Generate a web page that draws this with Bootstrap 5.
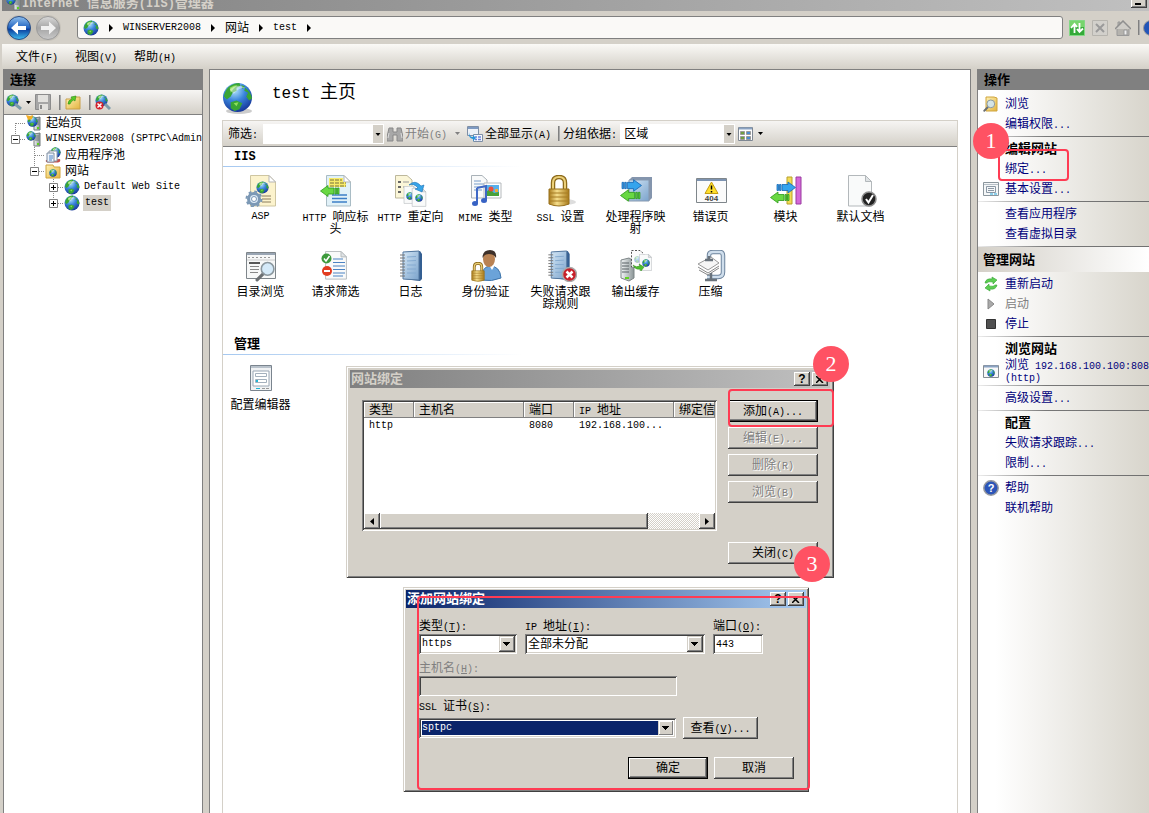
<!DOCTYPE html>
<html lang="zh-CN">
<head>
<meta charset="utf-8">
<meta name="viewport" content="width=device-width, initial-scale=1">
<title>Internet 信息服务(IIS)管理器</title>
<link href="https://cdn.jsdelivr.net/npm/bootstrap@5.3.0/dist/css/bootstrap.min.css" rel="stylesheet">
<style>
:root{--face:#d4d0c8;--shade:#808080;--dark:#404040;--navy:#00007b;--note:#ff3b53}
body{font:12px/16px "Liberation Sans","Noto Sans CJK SC",sans-serif;color:#000;background:var(--face)}
.la{font-family:"Liberation Mono",monospace;font-size:10px;white-space:pre}
span.la{line-height:0}
.tile>span.la{line-height:12px}
svg{flex:none;display:block}
a{color:inherit;text-decoration:none}
.i16{width:16px;height:16px}.i32{width:32px;height:32px}
.bold13{font-size:13px;font-weight:700}
.bold13 .la{font-size:12px}
/* window frame */
.wintitle{height:11px;margin-left:2px;background:linear-gradient(90deg,#808080,#c0c0c0);color:var(--face);padding-left:4px}
.caps{gap:2px;padding-right:2px;margin-bottom:3px}
.navrow{height:33px;padding-left:6px;gap:6px}
.orb{width:24px;height:24px;border:0;padding:0;background:none}
.orbs{background:#c6c2ba;border-radius:13px;padding:1px;gap:5px;margin-right:10px}
.crumbs{height:23px;gap:10px;padding-left:5px;background:#faf9f7;border:1px solid var(--shade);border-radius:3px;min-width:0}
.navtools{gap:7px;width:80px}
.iconbtn{border:0;padding:0;background:none;color:inherit}
.menurow{height:25px;margin-left:2px;padding-left:14px;gap:17px;background:linear-gradient(#faf9f6,var(--face))}
.panes{padding-left:3px;gap:6px;min-height:0}
.tree-pane{width:200px;border:1px solid var(--shade);border-width:0 1px}
.pane-head{height:21px;background:var(--shade);padding-left:6px;line-height:21px}
.grad{background:linear-gradient(#f6f5f3,var(--face))}
.tools{height:25px;border-bottom:1px solid var(--shade)}
.vsep{width:2px;height:15px;background:linear-gradient(90deg,#808080 50%,#aaa 50%)}
.tree li{display:flex;align-items:center;height:16px;padding-left:7px;white-space:nowrap}
.tree .lv1{padding-left:26px}.tree .lv2{padding-left:45px}
.tree .txt{margin-left:4px}
.tree .sel{background:var(--face);margin-left:3px;padding:0 2px 0 2px}
.tw{width:15px;height:16px}
/* centre */
.home-pane{border:1px solid var(--shade);border-bottom:0;padding:0 12px;min-width:0}
.hd{height:50px;gap:18px;padding-top:12px}
.hd h1{font-size:18px;font-weight:400;line-height:20px;margin:0}
.hd h1 .la{font-size:16px}
.feature{border:1px solid var(--face);border-bottom:0}
.flat-select{appearance:none;border:0;border-radius:0;height:20px;padding:0 14px 0 4px;font:inherit;color:#000;
 background:#fff url("data:image/svg+xml,%3Csvg xmlns='http://www.w3.org/2000/svg' width='10' height='18'%3E%3Cpath fill='%23d4d0c8' d='M0 0h10v18H0z'/%3E%3Cpath d='M2.500 8h5l-2.500 3z'/%3E%3C/svg%3E") right 1px center no-repeat}
.ft{gap:3px;height:26px;padding-left:5px;border-bottom:1px solid var(--shade)}
.sect{height:20px;line-height:18px;padding-left:11px;margin:0;background:linear-gradient(90deg,#a5c8f0,#fff 300px) left bottom/100% 1px no-repeat}
.tiles{display:grid;grid-template-columns:repeat(auto-fill,75px);grid-auto-rows:75px;padding-top:8px}
.tile{display:flex;flex-direction:column;align-items:center;text-align:center;line-height:12px;gap:4px}
/* actions */
.act-pane{width:172px}
.act-in{border-left:1px solid var(--shade);background:linear-gradient(90deg,#fff 10%,#d8d5cc);overflow:hidden}
.grp{list-style:none;margin:0;padding:2px 0;color:var(--navy);border-bottom:1px solid;border-image:linear-gradient(90deg,#eee,#777 40%,#707070) 1}
.grp li{display:flex;align-items:center;height:20px;padding-left:5px;gap:6px;white-space:nowrap}
.grp li.two-line{height:24px}
.grp .ic{width:16px;flex:none}
.grp .bold13{color:#000}
.sub{height:25px;line-height:25px;padding-left:5px;background:linear-gradient(90deg,var(--face),#fff)}
/* classic controls */
.dlg{position:absolute;background:var(--face);padding:4px;box-shadow:inset 1px 1px #d4d0c8,inset -1px -1px #404040,inset 2px 2px #fff,inset -2px -2px #808080}
.dlg-a{left:136px;top:296px;width:488px;height:212px}
.dlg-b{left:193px;top:517px;width:406px;height:205px;padding:3px}
.cap{height:18px;padding:0 2px 0 1px;color:var(--face);background:linear-gradient(90deg,#808080,#c0c0c0)}
.cap.on{color:#fff;background:linear-gradient(90deg,#0a246a,#a6caf0)}
.capbtn{width:16px;height:14px;padding:0;border:0;background:var(--face);box-shadow:inset -1px -1px #404040,inset 1px 1px #fff,inset -2px -2px #808080;color:#000;display:flex;align-items:center;justify-content:center}
.cbtn{height:22px;padding:0;border:0;width:90px;background:var(--face);color:#000;font:inherit;line-height:20px;box-shadow:inset -1px -1px #404040,inset 1px 1px #fff,inset -2px -2px #808080}
.cbtn:disabled{color:#808080;text-shadow:1px 1px #fff}
.cbtn.def{border:1px solid #000}
.w80{width:80px}.w75{width:75px}
.sunk,.sunk-edge{box-shadow:inset 1px 1px #808080,inset -1px -1px #fff,inset 2px 2px #404040,inset -2px -2px #d4d0c8}
.sunk{background:#fff}
.lv{width:355px;height:131px;padding:2px;overflow:hidden}
.lv table{table-layout:fixed;width:100%}
.lv th{height:16px;font-weight:400;line-height:16px;padding:0 0 0 5px;background:var(--face);box-shadow:inset -1px -1px #808080,inset 1px 1px #fff;white-space:nowrap;overflow:hidden}
.lv td{padding:0 0 0 5px;white-space:nowrap}
.hscroll{height:16px;background:repeating-conic-gradient(#fff 0 25%,#d4d0c8 0 50%) 0 0/2px 2px}
.thumb,.sbtn{background:var(--face);border:0;padding:0;height:16px;box-shadow:inset -1px -1px #404040,inset 1px 1px #fff,inset -2px -2px #808080}
.sbtn{width:16px}.thumb{width:268px}
.fld{height:20px;border:0;border-radius:0;appearance:none;padding:2px 20px 2px 3px;color:#000}
.drop{background:#fff url("data:image/svg+xml,%3Csvg xmlns='http://www.w3.org/2000/svg' width='16' height='16' shape-rendering='crispEdges'%3E%3Cpath fill='%23d4d0c8' d='M0 0h16v16H0z'/%3E%3Cpath fill='none' stroke='%23404040' d='M0 15.500h15.500V0'/%3E%3Cpath fill='none' stroke='%23808080' d='M1 14.500h13.500V1'/%3E%3Cpath fill='none' stroke='%23fff' d='M1.500 14V1.500H14'/%3E%3Cpath d='M4 6h7v1H4zM5 7h5v1H5zM6 8h3v1H6zM7 9h1v1H7z'/%3E%3C/svg%3E") right 2px center no-repeat}
.picked{background-color:#0a246a;color:#fff;box-shadow:inset 1px 1px #808080,inset -1px -1px #fff,inset 2px 2px #404040,inset -2px -2px #d4d0c8,inset 3px 3px #fff,inset -3px -3px #fff}
.lab{line-height:16px;white-space:nowrap}
/* tutorial marks */
.ring{position:absolute;border:2px solid var(--note);border-radius:4px;pointer-events:none}
.step{position:absolute;width:36px;height:36px;border-radius:50%;background:#ff5263;color:#fff;font:22px/36px "Liberation Serif",serif;text-align:center}
</style>
</head>
<body class="vh-100 overflow-hidden d-flex flex-column">
<svg width="0" height="0" class="position-absolute" aria-hidden="true">
<defs>
<radialGradient id="sea" cx=".4" cy=".25" r=".8"><stop offset="0" stop-color="#b5e6fb"/><stop offset=".45" stop-color="#3b86dd"/><stop offset="1" stop-color="#122f93"/></radialGradient>
<linearGradient id="gold" x2="1"><stop stop-color="#a97b1c"/><stop offset=".4" stop-color="#f6de8b"/><stop offset="1" stop-color="#a87a1a"/></linearGradient>
<linearGradient id="steel" x2="1"><stop stop-color="#f2f5f6"/><stop offset="1" stop-color="#8b9597"/></linearGradient>
<linearGradient id="bluebk" x2="1" y2="1"><stop stop-color="#d3e6f5"/><stop offset="1" stop-color="#7ba3cc"/></linearGradient>
<linearGradient id="orbB" x2="0" y2="1"><stop stop-color="#8fc0ee"/><stop offset=".5" stop-color="#2062c0"/><stop offset=".55" stop-color="#0a3c9c"/><stop offset="1" stop-color="#3fc0f2"/></linearGradient>
<linearGradient id="orbG" x2="0" y2="1"><stop stop-color="#d9d9d9"/><stop offset=".5" stop-color="#a5a5a5"/><stop offset="1" stop-color="#c9c9c9"/></linearGradient>
<linearGradient id="fold" x2="1" y2="1"><stop stop-color="#fff2b4"/><stop offset="1" stop-color="#e3b33f"/></linearGradient>
<symbol id="globe" viewBox="0 0 32 32"><circle cx="16" cy="16" r="15" fill="url(#sea)"/><path d="M7 5Q12 1 18 1L19 4 15 6 15 9 11 11 9 15 5 18 2 15Q3 9 7 5ZM24 6Q30 11 31 17L28 19 25 15 27 11 23 9ZM9 21L15 19 21 22 18 28 13 30 9 27ZM20 3L24 5 21 7Z" fill="#39a535"/><path d="M8 6Q12 3 16 3L12 7 9 11ZM12 22L17 21 15 25Z" fill="#8ede5d"/><path d="M8 8Q15 1 24 6Q17 6 12 12Z" fill="#fff" opacity=".45"/></symbol>
<symbol id="server" viewBox="0 0 16 16"><path d="M8 3L14 2V15H8Z" fill="url(#steel)" stroke="#727b7d"/><path d="M9 5H13M9 7H13M9 9H13" stroke="#6b7476"/><path d="M11 12h2v2h-2z" fill="#5fd120"/></symbol>
<symbol id="srvglobe" viewBox="0 0 16 16"><use href="#server"/><use href="#globe" x="0" y="0" width="10" height="10"/></symbol>
<symbol id="start" viewBox="0 0 16 16"><use href="#server"/><use href="#globe" x="1" y="1" width="11" height="11"/><path d="M0 0L4 1 7 0 6 4 2 5Z" fill="#f3ad25"/></symbol>
<symbol id="pools" viewBox="0 0 16 16"><use href="#globe" x="5" y="0" width="11" height="11"/><path d="M1 13Q0 15 3 15.500H13Q16 15 15 12" fill="#c4504a"/><path d="M4 4h8v10H4z" fill="#fff" stroke="#8b97a5"/><path d="M2 6h7v9H2z" fill="#edf3fb" stroke="#7f8da0"/><path d="M4 9h4M4 11h4M4 13h3" stroke="#4c83c5"/></symbol>
<symbol id="sites" viewBox="0 0 16 16"><path d="M1 4V2H8L9 4H15V15H1Z" fill="url(#fold)" stroke="#cfa43d"/><use href="#globe" x="4" y="6" width="8" height="8"/></symbol>
<symbol id="t-first" viewBox="0 0 15 16"><path d="M4.500 8V16M5 8.500H15" stroke="#888" stroke-dasharray="1 1"/></symbol>
<symbol id="t-mid" viewBox="0 0 15 16"><path d="M4.500 0V16M5 8.500H15" stroke="#888" stroke-dasharray="1 1"/></symbol>
<symbol id="t-minus" viewBox="0 0 15 16"><path d="M4.500 0V4M9 8.500H15" stroke="#888" stroke-dasharray="1 1"/><path d="M.5 4.500h8v8h-8z" fill="#fff" stroke="#808080"/><path d="M2 8.500h5" stroke="#000"/></symbol>
<symbol id="t-plus" viewBox="0 0 15 16"><path d="M4.500 0V16M9 8.500H15" stroke="#888" stroke-dasharray="1 1"/><path d="M.5 4.500h8v8h-8z" fill="#fff" stroke="#808080"/><path d="M2 8.500h5M4.500 6v5" stroke="#000"/></symbol>
<symbol id="t-plus-end" viewBox="0 0 15 16"><path d="M4.500 0V4M9 8.500H15" stroke="#888" stroke-dasharray="1 1"/><path d="M.5 4.500h8v8h-8z" fill="#fff" stroke="#808080"/><path d="M2 8.500h5M4.500 6v5" stroke="#000"/></symbol>
<symbol id="arrR" viewBox="0 0 4 8"><path d="M0 0L4 4 0 8Z"/></symbol>
<symbol id="arrD" viewBox="0 0 5 3"><path d="M0 0H5L2.500 3Z" fill="currentColor"/></symbol>
<symbol id="page" viewBox="0 0 24 32"><path d="M.5 .5H17.500L23.500 6.500V31H.5Z" fill="#f9fafa" stroke="#b3b8bb"/><path d="M17.500 .5V6.500H23.500Z" fill="#dfe3e5" stroke="#b3b8bb"/></symbol>
<symbol id="mag" viewBox="0 0 20 20"><path d="M8 12L2 18" stroke="#6b6f72" stroke-width="3" stroke-linecap="round"/><circle cx="12" cy="7.500" r="6" fill="#cfe7f9" fill-opacity=".85" stroke="#8b979e" stroke-width="1.500"/></symbol>
<symbol id="book" viewBox="0 0 24 32"><path d="M5 2L21 1 23 4V29L21 31 5 29Z" fill="#345f92"/><path d="M4 2L20 1V30L4 29Z" fill="url(#bluebk)" stroke="#54789f"/><path d="M8 7l9-.5M8 11l9-.5M8 15h9M8 19h9M8 23h9" stroke="#84aad0"/><path d="M1 5h5M1 8h5M1 11h5M1 14h5M1 17h5M1 20h5M1 23h5M1 26h5" stroke="#777" stroke-width="1"/></symbol>
<symbol id="lock" viewBox="0 0 22 32"><path d="M5 16V8Q5 2 11 2T17 8V16" fill="none" stroke="#8c6a1b" stroke-width="4.500"/><path d="M5 16V8Q5 2 11 2T17 8V16" fill="none" stroke="#ecd07a" stroke-width="2"/><path d="M1 14H21V29Q11 33 1 29Z" fill="url(#gold)" stroke="#97701c"/><path d="M1 18H21M1 22H21M1 26H21" stroke="#a67c25"/></symbol>
<symbol id="ar-r" viewBox="0 0 20 12"><path d="M1 3h1.500v6H1zM3.500 3H5v6H3.500zM6 3H12V.5L19.500 6 12 11.500V9H6Z" fill="#35a4ed" stroke="#1767b4" stroke-width=".8"/></symbol>
<symbol id="ar-l" viewBox="0 0 20 12"><path d="M19 3h-1.500v6H19zM16.500 3H15v6h1.500zM14 3H8V.5L.5 6 8 11.500V9h6Z" fill="#69d843" stroke="#2f9a1d" stroke-width=".8"/></symbol>
<symbol id="formic" viewBox="0 0 16 16"><path d="M.5 1.500h15v13H.5z" fill="#f5f7f8" stroke="#8b969d"/><path d="M1 3.500h14" stroke="#b7c0c7"/><path d="M3.500 5.500h9v6h-9zM5 7.500h6M5 9.500h6" fill="none" stroke="#8b98a5"/><path d="M7 13h3M11 13h3" stroke="#27a9de"/></symbol>
</defs>
</svg>

<header class="wintitle d-flex align-items-end justify-content-between overflow-hidden">
 <div class="d-flex align-items-end bold13"><svg class="i16"><use href="#srvglobe"/></svg><span><span class="la">Internet </span>信息服务<span class="la">(IIS)</span>管理器</span></div>
 <div class="caps d-flex align-items-end"><button class="capbtn" aria-label="最小化"><svg width="8" height="10"><path d="M0 7h6v2H0z"/></svg></button></div>
</header>

<nav class="navrow d-flex align-items-center overflow-hidden">
 <div class="orbs d-flex">
  <button class="orb" aria-label="后退"><svg viewBox="0 0 24 24"><circle cx="12" cy="12" r="11.500" fill="url(#orbB)" stroke="#2a4c82"/><path d="M4 12L11 5.500V10H19V14H11V18.500Z" fill="#fff"/></svg></button>
  <button class="orb" aria-label="前进"><svg viewBox="0 0 24 24"><circle cx="12" cy="12" r="11.500" fill="url(#orbG)" stroke="#9a9a9a"/><path d="M20 12L13 5.500V10H5V14H13V18.500Z" fill="#f0f0f0"/></svg></button>
 </div>
 <div class="crumbs d-flex align-items-center flex-grow-1">
  <svg class="i16"><use href="#globe"/></svg>
  <svg width="4" height="8"><use href="#arrR"/></svg><a href="#" class="la">WINSERVER2008</a>
  <svg width="4" height="8"><use href="#arrR"/></svg><a href="#">网站</a>
  <svg width="4" height="8"><use href="#arrR"/></svg><a href="#" class="la">test</a>
  <svg width="4" height="8"><use href="#arrR"/></svg>
 </div>
 <div class="navtools d-flex align-items-center flex-shrink-0">
  <button class="iconbtn" aria-label="刷新"><svg class="i16" viewBox="0 0 16 16"><path d="M.5 .5h15v15H.5z" fill="#35aa39" stroke="#82d884"/><path d="M1 1h14v6H1z" fill="#77d46c"/><path d="M5.500 13V5M2 8l3.500-4L8 7M10.500 3v8M8 9l2.500 3L14 8.500" fill="none" stroke="#fff" stroke-width="1.800"/></svg></button>
  <button class="iconbtn" aria-label="停止"><svg class="i16" viewBox="0 0 16 16"><path d="M.5 .5h15v15H.5z" fill="#d2d0cb" stroke="#b6b4ae"/><path d="M4 4l8 8M12 4l-8 8" stroke="#9a9a9a" stroke-width="2"/></svg></button>
  <button class="iconbtn" aria-label="主页"><svg class="i16" viewBox="0 0 16 16"><path d="M3 2h2v4H3zM2 8h12v7.500H2z" fill="#b5b3ae" stroke="#999"/><path d="M0 9L8 1l8 8" fill="#cfcdc8" stroke="#8f8f8f" stroke-width="1.500"/><path d="M9 10h3v5H9z" fill="#eee" stroke="#999"/></svg></button>
  <span class="vsep flex-shrink-0"></span>
  <button class="iconbtn" aria-label="帮助" style="margin-left:-4px"><svg class="i16" viewBox="0 0 16 16"><circle cx="8" cy="8" r="7.500" fill="#2356b8" stroke="#999"/></svg></button>
 </div>
</nav>

<nav class="menurow d-flex align-items-center">
 <a href="#">文件<span class="la">(F)</span></a><a href="#">视图<span class="la">(V)</span></a><a href="#">帮助<span class="la">(H)</span></a>
</nav>

<div class="panes d-flex flex-grow-1">
 <aside class="tree-pane bg-white flex-shrink-0 d-flex flex-column overflow-hidden">
  <div class="pane-head bold13">连接</div>
  <div class="tools grad d-flex align-items-center ps-1">
   <button class="iconbtn d-flex align-items-center gap-1" style="margin-left:-2px" aria-label="连接到"><svg class="i16" viewBox="0 0 16 16"><use href="#globe" width="13" height="13"/><path d="M9 10l6 5" stroke="#7d9cab" stroke-width="3"/></svg><svg width="5" height="3"><use href="#arrD"/></svg></button>
   <button class="iconbtn ms-1" aria-label="保存"><svg class="i16" viewBox="0 0 16 16"><path d="M.5 .5h15v15H.5z" fill="#a6a6a6" stroke="#8c8c8c"/><path d="M3 1h10v7H3zM4 10h9v6H4z" fill="#e2e1de"/><path d="M5 11h2v4H5z" fill="#888"/></svg></button>
   <span class="vsep ms-2 me-1"></span>
   <button class="iconbtn" aria-label="向上"><svg class="i16" viewBox="0 0 16 16"><path d="M1 15V5H8L9 3H15V15Z" fill="url(#fold)" stroke="#c9a048"/><path d="M3 10Q3 6 7 5L6 3 11 2 10 7 8.500 6Q6 7 5 10Z" fill="#55c927" stroke="#2e8e16" stroke-width=".6"/></svg></button>
   <span class="vsep ms-2 me-1"></span>
   <button class="iconbtn" aria-label="删除连接"><svg class="i16" viewBox="0 0 16 16"><use href="#globe" width="13" height="13"/><path d="M10 10l5 5" stroke="#7d9cab" stroke-width="3"/><circle cx="4.500" cy="11.500" r="4" fill="#d3202b"/><path d="M2.500 9.500l4 4M6.500 9.500l-4 4" stroke="#fff" stroke-width="1.500"/></svg></button>
  </div>
  <ul class="tree list-unstyled m-0">
   <li><svg class="tw"><use href="#t-first"/></svg><svg class="i16"><use href="#start"/></svg><a href="#" class="txt">起始页</a></li>
   <li><svg class="tw"><use href="#t-minus"/></svg><svg class="i16"><use href="#srvglobe"/></svg><a href="#" class="txt la">WINSERVER2008 (SPTPC\Admin</a></li>
   <li class="lv1"><svg class="tw"><use href="#t-mid"/></svg><svg class="i16"><use href="#pools"/></svg><a href="#" class="txt">应用程序池</a></li>
   <li class="lv1"><svg class="tw"><use href="#t-minus"/></svg><svg class="i16"><use href="#sites"/></svg><a href="#" class="txt">网站</a></li>
   <li class="lv2"><svg class="tw"><use href="#t-plus"/></svg><svg class="i16"><use href="#globe"/></svg><a href="#" class="txt la">Default Web Site</a></li>
   <li class="lv2"><svg class="tw"><use href="#t-plus-end"/></svg><svg class="i16"><use href="#globe"/></svg><a href="#" class="sel la">test</a></li>
  </ul>
 </aside>

 <main class="home-pane bg-white flex-grow-1 position-relative d-flex flex-column">
  <div class="hd d-flex align-items-start"><svg class="i32"><ellipse cx="17" cy="29" rx="13" ry="3" fill="#ccc"/><use href="#globe" width="31" height="31"/></svg><h1><span class="la">test </span>主页</h1></div>
  <section class="feature flex-grow-1">
   <div class="ft grad d-flex align-items-center">
    <label for="filter">筛选<span class="la">:</span></label>
    <select id="filter" class="flat-select" style="width:121px;margin-left:2px"><option></option></select>
    <button class="iconbtn d-flex align-items-center gap-1 text-nowrap" style="color:#808080"><svg class="i16" viewBox="0 0 16 16"><path d="M2 2h4v4h4V2h4l2 9v4h-6V9H6v6H0v-4z" fill="#a8a8a8" stroke="#888"/><path d="M2 7l-1 5M14 7l1 5" stroke="#ddd"/></svg><span style="margin-left:-2px">开始<span class="la">(G)</span></span><svg class="ms-1" width="5" height="3"><use href="#arrD"/></svg></button>
    <button class="iconbtn d-flex align-items-center text-nowrap ms-1 gap-1"><svg class="i16" viewBox="0 0 16 16"><path d="M.5 .5h11v9H.5z" fill="#eef2f8" stroke="#7e8fa6"/><path d="M1 2h10" stroke="#7e9ac2" stroke-width="2"/><path d="M6.500 8.500h9v7h-9z" fill="#f5f8fd" stroke="#7e8fa6"/><path d="M8 11h2M11 11h3M8 13.500h2M11 13.500h3" stroke="#6c82dc" stroke-width="1.500"/><path d="M2 6Q2 11 6 11V9L9 12 6 15V13Q1 12 2 6Z" fill="#2994d9"/></svg><span style="margin-left:-2px">全部显示<span class="la">(A)</span></span></button>
    <span class="vsep ms-1"></span>
    <label for="groupby">分组依据<span class="la">:</span></label>
    <select id="groupby" class="flat-select" style="width:115px"><option>区域</option></select>
    <button class="iconbtn d-flex align-items-center gap-1" aria-label="视图"><svg class="i16" viewBox="0 0 16 16"><path d="M.5 1.500h14v13H.5z" fill="#fff" stroke="#7e8792"/><path d="M1 2.500h13" stroke="#8aa2c2" stroke-width="2"/><path d="M2.500 5.500h4v3h-4zM2.500 10.500h4v3h-4z" fill="#6f9f3f" stroke="#999"/><path d="M8.500 5.500h4v3h-4zM8.500 10.500h4v3h-4z" fill="#4b8ccf" stroke="#999"/></svg><svg width="5" height="3"><use href="#arrD"/></svg></button>
   </div>
   <h2 class="sect bold13"><span class="la">IIS</span></h2>
   <div class="tiles">
    <a href="#" class="tile"><svg class="i32" viewBox="0 0 32 32"><path d="M5.500 .5H24L30.500 7V31H5.500Z" fill="#fcf3cd" stroke="#cfc6a1"/><path d="M24 .5V7h6.500z" fill="#fff" stroke="#b5b5b5"/><use href="#globe" x="11" y="6" width="13" height="13"/><path d="M17 21h9M17 24h9M17 27h9" stroke="#8a7d5d"/><circle cx="9" cy="24" r="5.500" fill="#dce9f5" stroke="#7b98b5" stroke-width="3"/><circle cx="9" cy="24" r="7.500" fill="none" stroke="#7b98b5" stroke-width="2" stroke-dasharray="3 2.900"/><circle cx="9" cy="24" r="2.500" fill="#fff" stroke="#7b98b5"/></svg><span class="la">ASP</span></a>
    <a href="#" class="tile"><svg class="i32" viewBox="0 0 32 32"><path d="M6.500 .5H24L30.500 7V31H6.500Z" fill="#e1f1f8" stroke="#a9bcc5"/><path d="M24 .5V7h6.500z" fill="#fff" stroke="#b5b5b5"/><path d="M9 3h14v4h3v5H9z" fill="#f9ec69"/><path d="M10 5h12M10 8h16M10 11h16" stroke="#77703f" stroke-dasharray="4 1"/><path d="M12 20h15M12 23.500h15M12 27h15" stroke="#3d7fc6" stroke-width="1.500"/><use href="#ar-l" x="0" y="10" width="20" height="12"/></svg><span><span class="la">HTTP </span>响应标<br>头</span></a>
    <a href="#" class="tile"><svg class="i32" viewBox="0 0 32 32"><path d="M.5 .5H12L17 5V23H.5Z" fill="#fbf6d8" stroke="#bdb89c"/><path d="M3 7h3M3 12h3M3 17h3" stroke="#666" stroke-width="2"/><path d="M8 7h6M8 12h5" stroke="#999"/><use href="#page" x="8" y="11" width="15" height="18"/><use href="#globe" x="11" y="17" width="8" height="8"/><use href="#page" x="16" y="13" width="16" height="19"/><use href="#globe" x="20" y="19" width="8" height="8"/><path d="M14 10Q20 4 26 11L29 10 27 17 20 14 23 13Q19 8 14 10Z" fill="#38a5e8" stroke="#1c70b5" stroke-width=".6"/></svg><span><span class="la">HTTP </span>重定向</span></a>
    <a href="#" class="tile"><svg class="i32" viewBox="0 0 32 32"><path d="M1.500 .5H12L17 5V23H1.500Z" fill="#f9fafa" stroke="#aab2b8"/><path d="M4 6h7M4 9h10M4 12h9M4 15h8" stroke="#779dc9"/><path d="M14 8h17v15H14z" fill="#fff" stroke="#b5b9bc"/><path d="M16 10h13v11H16z" fill="#58b0eb"/><path d="M16 21v-4l4-3 4 4 5-1v4z" fill="#48a13a"/><circle cx="21" cy="14" r="2.500" fill="#e9503c"/><path d="M25 14h3v3h-3z" fill="#f4ae35"/><path d="M7 13L16 11V25M7 13V28" fill="none" stroke="#3f68c6" stroke-width="2"/><ellipse cx="5" cy="28.500" rx="3" ry="2.500" fill="#3762c4"/><ellipse cx="14" cy="25.500" rx="3" ry="2.500" fill="#3762c4"/></svg><span><span class="la">MIME </span>类型</span></a>
    <a href="#" class="tile"><svg class="i32" viewBox="0 0 32 32"><ellipse cx="20" cy="27" rx="11" ry="3" fill="#ddd"/><use href="#lock" x="3" y="0" width="22" height="32"/></svg><span><span class="la">SSL </span>设置</span></a>
    <a href="#" class="tile"><svg class="i32" viewBox="0 0 32 32"><path d="M9 5L12 2H32V23L29 26H9Z" fill="#8495ad"/><path d="M9 5h20v21H9z" fill="url(#bluebk)" stroke="#8799af"/><use href="#ar-r" x="1" y="4" width="21" height="13"/><use href="#ar-l" x="0" y="14" width="21" height="13"/></svg><span>处理程序映<br>射</span></a>
    <a href="#" class="tile"><svg class="i32" viewBox="0 0 32 32"><path d="M1.500 3.500h30v24h-30z" fill="#fbfbfb" stroke="#7f868b"/><path d="M2 5h29" stroke="#7d93b1" stroke-width="2"/><path d="M16.500 7L23 18.500H10Z" fill="#ffdf2c" stroke="#c59c12" stroke-linejoin="round"/><path d="M16.500 10.500v4M16.500 16v1.500" stroke="#000" stroke-width="1.500"/><text x="16.500" y="26" font-family="Liberation Sans" font-size="8" font-weight="700" text-anchor="middle" fill="#444">404</text></svg><span>错误页</span></a>
    <a href="#" class="tile"><svg class="i32" viewBox="0 0 32 32"><path d="M17 2h5v27h-5z" fill="#f2dc54" stroke="#b7a02c"/><path d="M26 2h5v27h-5z" fill="#d468d8" stroke="#9a3ba0"/><use href="#ar-r" x="6" y="6" width="20" height="13"/><use href="#ar-l" x="0" y="16" width="20" height="13"/></svg><span>模块</span></a>
    <a href="#" class="tile"><svg class="i32" viewBox="0 0 32 32"><use href="#page" x="2" y="0" width="26" height="32"/><circle cx="24" cy="24" r="7" fill="#222" stroke="#8d8d8d" stroke-width="1.500"/><path d="M21 24l2.500 3.500L28 20" fill="none" stroke="#fff" stroke-width="2"/></svg><span>默认文档</span></a>
    <a href="#" class="tile"><svg class="i32" viewBox="0 0 32 32"><path d="M1.500 2.500h29v26h-29z" fill="#f7f8f8" stroke="#7f868b"/><path d="M2 4h28" stroke="#9aa6b4" stroke-width="2"/><path d="M3 7.500h24" stroke="#999" stroke-dasharray="2 2"/><path d="M2 10h28" stroke="#ccc"/><path d="M4 13h11" stroke="#222" stroke-width="1.500"/><path d="M5 16.500h9M5 19.500h9M5 22.500h8" stroke="#888"/><use href="#mag" x="10" y="11" width="21" height="21"/></svg><span>目录浏览</span></a>
    <a href="#" class="tile"><svg class="i32" viewBox="0 0 32 32"><use href="#page" x="4" y="1" width="24" height="29"/><path d="M13 9h10M13 12.500h12M13 16h12M13 19.500h12M13 23h12M13 26h10" stroke="#4b83c3"/><circle cx="6.500" cy="8.500" r="5" fill="#3d9a3c"/><path d="M4 8.500l2 2.500L9.500 6" fill="none" stroke="#fff" stroke-width="1.500"/><circle cx="7" cy="21" r="5" fill="#e23c20"/><path d="M4 21h6" stroke="#fff" stroke-width="2"/></svg><span>请求筛选</span></a>
    <a href="#" class="tile"><svg class="i32"><use href="#book" x="4" width="24" height="32"/></svg><span>日志</span></a>
    <a href="#" class="tile"><svg class="i32" viewBox="0 0 32 32"><path d="M11 30Q11 17 20 16Q30 16 31 28Q22 32 11 30Z" fill="#6ba3d9" stroke="#3e74aa"/><path d="M19 15l3 5 3-5z" fill="#fff"/><ellipse cx="19" cy="9" rx="6" ry="8" fill="#b98253"/><path d="M12.500 7Q13 0 20 0T26 8Q24 4 19 4T13 8Z" fill="#3e3029"/><use href="#lock" x="1" y="12" width="14" height="20"/></svg><span>身份验证</span></a>
    <a href="#" class="tile"><svg class="i32" viewBox="0 0 32 32"><use href="#book" x="2" width="24" height="31"/><circle cx="24.500" cy="24.500" r="7" fill="#c8202a" stroke="#a9a9a9" stroke-width="1.500"/><path d="M21.500 21.500l6 6M27.500 21.500l-6 6" stroke="#fff" stroke-width="2.500"/></svg><span>失败请求跟<br>踪规则</span></a>
    <a href="#" class="tile"><svg class="i32" viewBox="0 0 32 32"><path d="M1 10L9 8 14 11V28L9 31 1 28Z" fill="url(#steel)" stroke="#7d8587"/><path d="M2 13h7M2 16h7M2 19h7M2 22h7" stroke="#596164"/><path d="M5 27h4v2H5z" fill="#62d421"/><path d="M11.500 .5H20L24 4V17H11.500Z" fill="#fbfbfb" stroke="#555" stroke-dasharray="2 1.500"/><use href="#globe" x="14" y="6" width="7" height="7" opacity=".4"/><use href="#page" x="19" y="4" width="13" height="17"/><use href="#globe" x="22" y="9" width="8" height="8"/><path d="M13 15Q16 18 20 16L19 14 24 17 21 21 20 19Q15 20 13 15Z" fill="#4fc12c" stroke="#2b8915" stroke-width=".5"/></svg><span>输出缓存</span></a>
    <a href="#" class="tile"><svg class="i32" viewBox="0 0 32 32"><path d="M14 9V5Q14 2 18 2H25Q28 2 28 6V22Q28 27 23 27H12" fill="none" stroke="#6d839c" stroke-width="4.500"/><path d="M14 9V5Q14 2 18 2H25Q28 2 28 6V22Q28 27 23 27H12" fill="none" stroke="#cfdeec" stroke-width="2.500"/><path d="M3 14L16 7 24 13 13 20Z" fill="#f6f6f6" stroke="#999"/><path d="M3 17L13 23 24 16M4 20L13 25 24 18" fill="none" stroke="#888"/><path d="M10 10h8M14 6v4M16 23v7M10 30h12" stroke="#6a737c" stroke-width="2.500"/></svg><span>压缩</span></a>
   </div>
   <h2 class="sect bold13" style="margin-top:10px">管理</h2>
   <div class="tiles">
    <a href="#" class="tile"><svg class="i32" viewBox="0 0 32 32"><path d="M5.500 2.500h21v25h-21z" fill="#f0f2f4" stroke="#7a848e"/><path d="M6 4h20" stroke="#b9c2cb" stroke-width="2"/><path d="M8 8h16v15H8z" fill="#fff" stroke="#9aa6b4"/><path d="M10.500 10.500h11v3h-11zM10.500 16.500h11v3h-11z" fill="#fff" stroke="#a4b0bd"/><path d="M11 18h2" stroke="#21b5d5" stroke-width="2"/><path d="M11 25.500h4" stroke="#21b5d5"/><path d="M17 25.500h8" stroke="#999" stroke-dasharray="3 1"/></svg><span>配置编辑器</span></a>
   </div>
  </section>

  <section class="dlg dlg-a" role="dialog" aria-label="网站绑定">
   <div class="cap d-flex align-items-center"><span class="bold13 flex-grow-1">网站绑定</span><button class="capbtn" aria-label="帮助"><b>?</b></button><button class="capbtn" style="margin-left:2px" aria-label="关闭"><svg width="8" height="7"><path d="M0 0l7 7M7 0L0 7" stroke="#000" stroke-width="1.500"/></svg></button></div>
   <div class="d-flex" style="padding:12px 12px 0;gap:11px">
    <div class="lv sunk d-flex flex-column justify-content-between">
     <table><colgroup><col style="width:50px"><col style="width:110px"><col style="width:50px"><col style="width:100px"><col></colgroup>
      <thead><tr><th>类型</th><th>主机名</th><th>端口</th><th><span class="la">IP </span>地址</th><th>绑定信</th></tr></thead>
      <tbody class="la"><tr><td>http</td><td></td><td>8080</td><td>192.168.100...</td><td></td></tr></tbody></table>
     <div class="hscroll d-flex"><button class="sbtn d-flex align-items-center justify-content-center" aria-label="向左"><svg width="4" height="7"><path d="M4 0V7L0 3.500Z"/></svg></button><div class="thumb"></div><button class="sbtn ms-auto d-flex align-items-center justify-content-center" aria-label="向右"><svg width="4" height="7"><path d="M0 0V7L4 3.500Z"/></svg></button></div>
    </div>
    <div class="d-flex flex-column" style="gap:5px">
     <button class="cbtn def">添加<span class="la">(A)...</span></button>
     <button class="cbtn" disabled>编辑<span class="la">(E)...</span></button>
     <button class="cbtn" disabled>删除<span class="la">(R)</span></button>
     <button class="cbtn" disabled>浏览<span class="la">(B)</span></button>
     <button class="cbtn" style="margin-top:34px">关闭<span class="la">(C)</span></button>
    </div>
   </div>
   <div class="ring" style="left:382px;top:23px;width:106px;height:38px"></div>
   <div class="step" style="left:467px;top:-20px">2</div>
   <div class="step" style="left:448px;top:180px">3</div>
  </section>

  <section class="dlg dlg-b" role="dialog" aria-label="添加网站绑定">
   <div class="cap on d-flex align-items-center"><span class="bold13 flex-grow-1">添加网站绑定</span><button class="capbtn" aria-label="帮助"><b>?</b></button><button class="capbtn" style="margin-left:2px" aria-label="关闭"><svg width="8" height="7"><path d="M0 0l7 7M7 0L0 7" stroke="#000" stroke-width="1.500"/></svg></button></div>
   <form class="d-flex flex-column" style="padding:10px 12px 0 13px" onsubmit="return false">
    <div class="d-flex" style="gap:8px">
     <div class="d-flex flex-column"><label class="lab" for="kind">类型<span class="la">(<u>T</u>):</span></label><select id="kind" class="fld drop la sunk-edge" style="width:98px"><option>https</option></select></div>
     <div class="d-flex flex-column"><label class="lab" for="ip"><span class="la">IP </span>地址<span class="la">(<u>I</u>):</span></label><select id="ip" class="fld drop sunk-edge" style="width:180px"><option>全部未分配</option></select></div>
     <div class="d-flex flex-column"><label class="lab" for="port">端口<span class="la">(<u>O</u>):</span></label><input id="port" class="fld sunk la" style="width:50px;padding-right:4px" value="443"></div>
    </div>
    <label class="lab" for="host" style="color:#808080;margin-top:6px">主机名<span class="la">(<u>H</u>):</span></label>
    <input id="host" class="fld sunk-edge" style="width:258px;background:var(--face)" disabled>
    <label class="lab" for="cert" style="margin-top:2px"><span class="la">SSL </span>证书<span class="la">(<u>S</u>):</span></label>
    <div class="d-flex align-items-center" style="gap:7px;margin-top:3px"><select id="cert" class="fld drop picked la" style="width:257px"><option>sptpc</option></select><button class="cbtn w75">查看<span class="la">(<u>V</u>)...</span></button></div>
    <div class="d-flex justify-content-end" style="gap:6px;margin-top:18px"><button class="cbtn w80 def">确定</button><button class="cbtn w80">取消</button></div>
   </form>
   <div class="ring" style="left:14px;top:9px;width:393px;height:194px"></div>
  </section>
 </main>

 <aside class="act-pane flex-shrink-0 position-relative d-flex flex-column">
  <div class="act-in flex-grow-1">
   <div class="pane-head bold13">操作</div>
   <ul class="grp" style="padding-top:4px">
    <li><span class="ic"><svg class="i16" viewBox="0 0 16 16"><path d="M3 1h8l3 1v13H3z" fill="url(#fold)" stroke="#cfa43d"/><use href="#mag" x="0" y="3" width="13" height="13"/></svg></span><a href="#">浏览</a></li>
    <li><span class="ic"></span><a href="#">编辑权限<span class="la">...</span></a></li>
   </ul>
   <ul class="grp">
    <li><span class="ic"></span><span class="bold13">编辑网站</span></li>
    <li><span class="ic"></span><a href="#">绑定<span class="la">...</span></a></li>
    <li><span class="ic"><svg class="i16"><use href="#formic"/></svg></span><a href="#">基本设置<span class="la">...</span></a></li>
   </ul>
   <ul class="grp">
    <li><span class="ic"></span><a href="#">查看应用程序</a></li>
    <li><span class="ic"></span><a href="#">查看虚拟目录</a></li>
   </ul>
   <div class="sub bold13">管理网站</div>
   <ul class="grp">
    <li><span class="ic"><svg class="i16" viewBox="0 0 16 16"><path d="M2 7Q3 2 9 3V1L14 4 10 8V6Q5 5 4 7ZM14 9Q13 14 7 13V15L2 12 6 8V10Q11 11 12 9Z" fill="#5ccd52" stroke="#38a237" stroke-width=".6"/></svg></span><a href="#">重新启动</a></li>
    <li style="color:#808080"><span class="ic"><svg class="i16" viewBox="0 0 16 16"><path d="M5 3L11 8 5 13Z" fill="#aaa" stroke="#888"/></svg></span><span>启动</span></li>
    <li><span class="ic"><svg class="i16" viewBox="0 0 16 16"><path d="M3.500 3.500h9v9h-9z" fill="#505050" stroke="#333"/></svg></span><a href="#">停止</a></li>
   </ul>
   <ul class="grp">
    <li><span class="ic"></span><span class="bold13">浏览网站</span></li>
    <li class="two-line"><span class="ic"><svg class="i16" viewBox="0 0 16 16"><path d="M.5 2.500h15v12H.5z" fill="#f8f8f8" stroke="#858c93"/><path d="M1 3.500h14" stroke="#8aa2c2" stroke-width="2"/><use href="#globe" x="4" y="6" width="8" height="8"/></svg></span><a href="#" style="line-height:12px">浏览<span class="la"> 192.168.100.100:8080</span><br><span class="la">(http)</span></a></li>
   </ul>
   <ul class="grp"><li><span class="ic"></span><a href="#">高级设置<span class="la">...</span></a></li></ul>
   <ul class="grp">
    <li><span class="ic"></span><span class="bold13">配置</span></li>
    <li><span class="ic"></span><a href="#">失败请求跟踪<span class="la">...</span></a></li>
    <li><span class="ic"></span><a href="#">限制<span class="la">...</span></a></li>
   </ul>
   <ul class="grp border-0">
    <li><span class="ic"><svg class="i16" viewBox="0 0 16 16"><circle cx="8" cy="8" r="7.200" fill="#2c55b8" stroke="#96999f" stroke-width="1.500"/><text x="8" y="12" font-family="Liberation Sans" font-size="11" font-weight="700" text-anchor="middle" fill="#fff">?</text></svg></span><a href="#">帮助</a></li>
    <li><span class="ic"></span><a href="#">联机帮助</a></li>
   </ul>
  </div>
  <div class="ring" style="left:21px;top:80px;width:71px;height:32px"></div>
  <div class="step" style="left:-4px;top:54px">1</div>
 </aside>
</div>
<script src="https://cdn.jsdelivr.net/npm/bootstrap@5.3.0/dist/js/bootstrap.bundle.min.js"></script>
</body>
</html>
